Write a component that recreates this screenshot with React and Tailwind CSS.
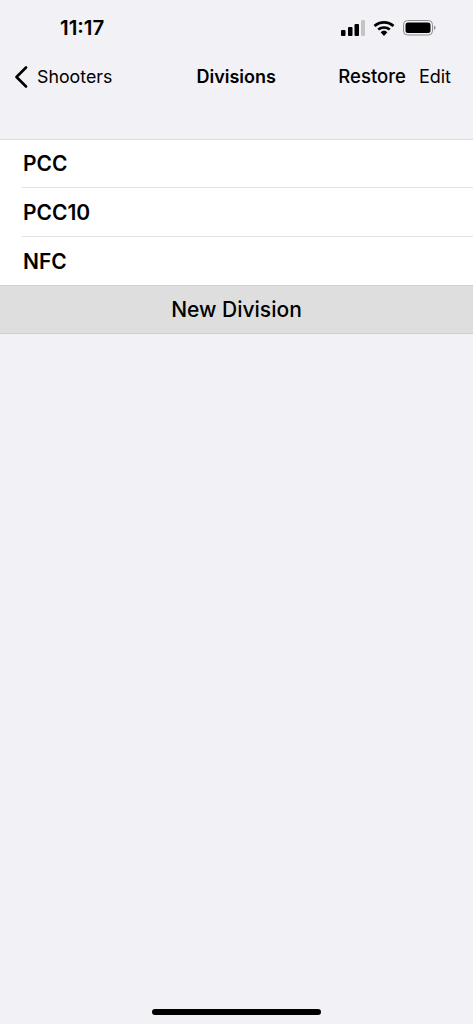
import React from "react";

const font = { fontFamily: "Inter" };

const divisions = ["PCC", "PCC10", "NFC"];
const rowHeights = ["h-[48px]", "h-[49px]", "h-[48px]"];

function StatusIcons() {
  return (
    <div className="flex items-center gap-[8px]">
      <svg width="24" height="16" viewBox="0 0 24 16">
        <rect x="0" y="10" width="4.5" height="6" rx="1" fill="#000" />
        <rect x="7" y="7" width="4.5" height="9" rx="1" fill="#000" />
        <rect x="13.5" y="4" width="4.5" height="12" rx="1" fill="#000" />
        <rect x="20" y="0" width="4" height="16" rx="1" fill="#c4c4c6" />
      </svg>
      <svg width="22" height="16" viewBox="0 0 22 16" fill="none">
        <path d="M1.5 6 A14 14 0 0 1 20.5 6" stroke="#000" strokeWidth="2.8" />
        <path d="M5.2 9.6 A9 9 0 0 1 16.8 9.6" stroke="#000" strokeWidth="2.6" />
        <path d="M7.6 12.2 A5 5 0 0 1 14.4 12.2 L11 16 Z" fill="#000" />
      </svg>
      <svg width="33" height="16" viewBox="0 0 33 16" fill="none">
        <rect x="0.5" y="0.5" width="29" height="14.5" rx="4" stroke="#8e8e90" />
        <rect x="2.5" y="2.5" width="25" height="10.5" rx="2.5" fill="#000" />
        <path d="M31 5.5 C32.2 6 32.5 7 32.5 7.8 C32.5 8.6 32.2 9.5 31 10 Z" fill="#8e8e90" />
      </svg>
    </div>
  );
}

export default function App() {
  return (
    <div className="relative h-[1024px] w-full overflow-hidden bg-[#f2f1f6] text-black" style={font}>
      {/* status bar */}
      <div className="flex h-[56px] items-center justify-between pl-[60px] pr-[37px]">
        <span className="text-[20.5px] leading-none font-semibold">11:17</span>
        <StatusIcons />
      </div>

      {/* nav bar */}
      <div className="flex h-[41px] items-center justify-between pl-[14px] pr-[22px]">
        <div className="flex w-[120px] items-center gap-[9px]">
          <svg width="14" height="22" viewBox="0 0 14 22" fill="none">
            <path d="M12 1.5 L2.5 11 L12 20.5" stroke="#000" strokeWidth="2.6" strokeLinecap="round" strokeLinejoin="round" />
          </svg>
          <span className="text-[17.8px] leading-none">Shooters</span>
        </div>
        <span className="text-[18px] leading-none font-semibold">Divisions</span>
        <div className="flex items-center gap-[13px]">
          <span className="text-[18.5px] leading-none font-medium">Restore</span>
          <span className="text-[18px] leading-none">Edit</span>
        </div>
      </div>

      {/* list */}
      <div className="mt-[42px] border-t border-[#dcdcde] bg-white">
        {divisions.map((name, i) => (
          <div key={name} className="pl-[22px]">
            <div
              className={
                rowHeights[i] +
                " flex items-center pl-[1px] pt-[1px] text-[21px] font-semibold " +
                (i < divisions.length - 1 ? "border-b border-[#e2e2e4]" : "")
              }
            >
              {name}
            </div>
          </div>
        ))}
        <div className="flex h-[49px] items-center justify-center border-y border-[#cfcfcf] bg-[#dedede] pt-[1px] text-[21px] font-[550]">
          New Division
        </div>
      </div>

      {/* home indicator */}
      <div className="absolute bottom-[9px] left-[152px] h-[6px] w-[169px] rounded-full bg-black" />
    </div>
  );
}
